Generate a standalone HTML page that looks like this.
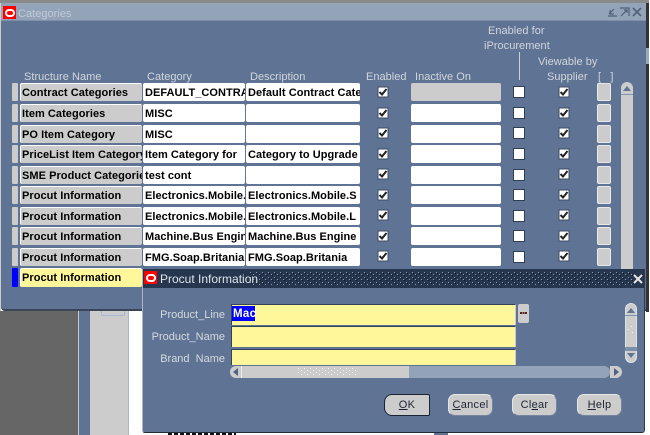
<!DOCTYPE html>
<html><head><meta charset="utf-8"><style>
html,body{margin:0;padding:0;background:#fff}
#p{position:relative;width:650px;height:435px;overflow:hidden;background:#fff;font-family:"Liberation Sans",sans-serif;font-size:11px}
#p div,#p svg{position:absolute}
.l{color:#d0d5dc;white-space:nowrap;letter-spacing:.03px;line-height:14px}
.h{left:12px;width:6px;height:18px;background:#ccc;border-radius:1px}
.s,.c,.d{height:18px;line-height:20px;font-weight:bold;color:#000;overflow:hidden;white-space:nowrap;letter-spacing:.05px;border-radius:2px;box-sizing:border-box}
.s{left:20px;width:122px;background:#ccc;padding-left:1px;border:1px solid #fff;border-width:1px 0 0 1px;line-height:19px}
.c{left:143px;width:102px;background:#fff;padding-left:2px}
.d{left:246px;width:113.5px;background:#fff;padding-left:2px}
.i{left:411px;width:90px;height:18px;background:#fff;border-radius:2px}
.x{left:597px;width:14px;height:18px;background:#ccc;border:1px solid #e8e8e8;border-radius:2px;box-sizing:border-box}
.u{left:514px;width:10px;height:10px;background:#fff;box-shadow:0 0 0 1px #2f3f55}
.f{left:231px;width:285px;background:#fff799;box-sizing:border-box;border-top:1px solid #33435c;border-left:1px solid #33435c;border-right:1px solid #c8ccd0}
.r{text-align:right;width:90px;left:135px;color:#d5d9df;line-height:14px;white-space:nowrap}
.btn{top:394px;height:22px;background:#ccc;border-radius:7px;box-sizing:border-box;border:1px solid #e6e6e6;border-right-color:#79859a;border-bottom-color:#79859a;color:#1c2433;text-align:center;line-height:20px;letter-spacing:.3px}
</style></head><body><div id="p">
<div style="left:0;top:311px;width:78px;height:124px;background:#666"></div>
<div style="left:78px;top:311px;width:1px;height:124px;background:#c8c8c8"></div>
<div style="left:79px;top:311px;width:11px;height:124px;background:#5f7494"></div>
<div style="left:90px;top:311px;width:38px;height:124px;background:#ccc;border-right:1px solid #a9b8d0"></div>
<div style="left:101px;top:311px;width:22px;height:4px;border:1px solid #a9b8d0;border-top:0;border-radius:0 0 2px 2px"></div>
<div style="left:646px;top:0;width:4px;height:435px;background:#fff"></div>
<div style="left:646px;top:0;width:3px;height:312px;background:#333"></div>
<div style="left:0;top:0;width:649px;height:3px;background:#8a8a8a"></div>
<div style="left:646px;top:48px;width:3px;height:16px;background:#9aa8bc"></div>
<div style="left:0;top:3px;width:1px;height:308px;background:#ccc"></div>
<div style="left:1px;top:3px;width:645px;height:308px;background:#5f7494;border-radius:0 0 0 4px;border-bottom:2px solid #3a4658;box-sizing:border-box"></div>
<div style="left:1px;top:3px;width:645px;height:18px;background:#93a3b8;border-bottom:1px solid #7f90a8;box-sizing:border-box"></div>
<div style="left:3px;top:6px;width:13px;height:13px;background:#f00"></div>
<div style="left:5px;top:9px;width:6px;height:4px;border:2px solid #fff;border-radius:4px"></div>
<div class="l" style="left:18px;top:7px;color:#c0cad6">Categories</div>
<svg style="left:606px;top:6px" width="38" height="12" viewBox="0 0 38 12"><path d="M2 10h9M3 8l5-5M4 4v4h4" fill="none" stroke="#4f5f75" stroke-width="1.200"/><path d="M14 2h9v8M15 10l6-6M18 4h3v3" fill="none" stroke="#4f5f75" stroke-width="1.200"/><path d="M27 2l8 8M35 2l-8 8" fill="none" stroke="#4f5f75" stroke-width="1.600"/></svg>

<div class="l" style="left:24px;top:70px">Structure Name</div>
<div class="l" style="left:147px;top:70px">Category</div>
<div class="l" style="left:250px;top:70px">Description</div>
<div class="l" style="left:366px;top:70px">Enabled</div>
<div class="l" style="left:415px;top:70px">Inactive On</div>
<div class="l" style="left:488px;top:24px">Enabled for</div>
<div class="l" style="left:484px;top:39px">iProcurement</div>
<div style="left:519px;top:52px;width:1px;height:28px;background:#ccd3dc"></div>
<div class="l" style="left:538px;top:55px">Viewable by</div>
<div class="l" style="left:547px;top:70px">Supplier</div>
<div class="l" style="left:598px;top:70px">[&nbsp;&nbsp;&nbsp;]</div>

<div class="h" style="top:83px"></div><div class="s" style="top:83px">Contract Categories</div><div class="c" style="top:83px">DEFAULT_CONTRACT</div><div class="d" style="top:83px">Default Contract Category</div>
<div class="h" style="top:104px"></div><div class="s" style="top:104px">Item Categories</div><div class="c" style="top:104px">MISC</div><div class="d" style="top:104px"></div>
<div class="h" style="top:125px"></div><div class="s" style="top:125px">PO Item Category</div><div class="c" style="top:125px">MISC</div><div class="d" style="top:125px"></div>
<div class="h" style="top:145px"></div><div class="s" style="top:145px">PriceList Item Category</div><div class="c" style="top:145px">Item Category for</div><div class="d" style="top:145px">Category to Upgrade</div>
<div class="h" style="top:166px"></div><div class="s" style="top:166px">SME Product Categories</div><div class="c" style="top:166px">test cont</div><div class="d" style="top:166px"></div>
<div class="h" style="top:186px"></div><div class="s" style="top:186px">Procut Information</div><div class="c" style="top:186px">Electronics.Mobile.S</div><div class="d" style="top:186px">Electronics.Mobile.S</div>
<div class="h" style="top:207px"></div><div class="s" style="top:207px">Procut Information</div><div class="c" style="top:207px">Electronics.Mobile.L</div><div class="d" style="top:207px">Electronics.Mobile.L</div>
<div class="h" style="top:227px"></div><div class="s" style="top:227px">Procut Information</div><div class="c" style="top:227px">Machine.Bus Engine</div><div class="d" style="top:227px">Machine.Bus Engine</div>
<div class="h" style="top:248px"></div><div class="s" style="top:248px">Procut Information</div><div class="c" style="top:248px">FMG.Soap.Britania</div><div class="d" style="top:248px">FMG.Soap.Britania</div>
<div class="h" style="top:268px;height:19px;background:#00f"></div><div class="s" style="top:268px;height:19px;background:#fff799">Procut Information</div>

<div class="i" style="top:83px;background:#ccc"></div>
<div class="i" style="top:104px"></div><div class="i" style="top:125px"></div><div class="i" style="top:145px"></div><div class="i" style="top:166px"></div><div class="i" style="top:186px"></div><div class="i" style="top:207px"></div><div class="i" style="top:227px"></div><div class="i" style="top:248px"></div>

<div class="u" style="top:87px"></div><div class="u" style="top:108px"></div><div class="u" style="top:128px"></div><div class="u" style="top:149px"></div><div class="u" style="top:170px"></div><div class="u" style="top:190px"></div><div class="u" style="top:211px"></div><div class="u" style="top:231px"></div><div class="u" style="top:252px"></div>

<div class="x" style="top:83px"></div><div class="x" style="top:104px"></div><div class="x" style="top:125px"></div><div class="x" style="top:145px"></div><div class="x" style="top:166px"></div><div class="x" style="top:186px"></div><div class="x" style="top:207px"></div><div class="x" style="top:227px"></div><div class="x" style="top:248px"></div>

<svg style="left:0;top:0" width="650" height="270" viewBox="0 0 650 270"><defs><g id="ck"><rect x="-5" y="-5" width="10" height="10" fill="#fff" stroke="#3c4d66"/><path d="M-3.500 0l2.500 2.500 4.500-5.500" fill="none" stroke="#222" stroke-width="2"/></g></defs>
<use href="#ck" x="383" y="92"/><use href="#ck" x="383" y="113"/><use href="#ck" x="383" y="133"/><use href="#ck" x="383" y="154"/><use href="#ck" x="383" y="174"/><use href="#ck" x="383" y="195"/><use href="#ck" x="383" y="215"/><use href="#ck" x="383" y="236"/><use href="#ck" x="383" y="256"/>
<use href="#ck" x="564" y="92"/><use href="#ck" x="564" y="113"/><use href="#ck" x="564" y="133"/><use href="#ck" x="564" y="154"/><use href="#ck" x="564" y="174"/><use href="#ck" x="564" y="195"/><use href="#ck" x="564" y="215"/><use href="#ck" x="564" y="236"/><use href="#ck" x="564" y="256"/></svg>

<div style="left:621px;top:82px;width:12px;height:188px;background:#ccc;border-radius:6px 6px 0 0"></div>
<div style="left:621px;top:94px;width:12px;height:1px;background:#8296b0"></div>
<svg style="left:622px;top:85px" width="10" height="8"><path d="M1 6h8L5 1z" fill="#5f7494"/></svg>

<div style="left:142px;top:269px;width:503px;height:164px;background:#5f7494;border-left:1px solid #aab6c6;border-bottom:1px solid #222c3a;border-right:1px solid #2f3b4d;border-radius:0 0 3px 3px;box-sizing:border-box"></div>
<div style="left:143px;top:269px;width:501px;height:19px;background:#26364f"></div>
<svg style="left:250px;top:272px" width="384" height="13"><defs><pattern id="dt" width="6" height="5" patternUnits="userSpaceOnUse"><rect x="0" y="0" width="1" height="1" fill="#8f9db2"/><rect x="3" y="2" width="1" height="1" fill="#8f9db2"/><rect x="1" y="1" width="1" height="1" fill="#0f1a2a"/><rect x="4" y="3" width="1" height="1" fill="#0f1a2a"/></pattern></defs><rect width="384" height="13" fill="url(#dt)"/></svg>
<div style="left:144px;top:271px;width:13px;height:13px;background:#f00"></div>
<div style="left:146px;top:274px;width:6px;height:4px;border:2px solid #fff;border-radius:4px"></div>
<div class="l" style="left:160px;top:272px;color:#dfe4ea;font-size:12px;letter-spacing:0">Procut Information</div>
<svg style="left:632px;top:273px" width="12" height="12"><path d="M2 2l8 8M10 2l-8 8" stroke="#e8e8e8" stroke-width="2"/></svg>

<div class="r" style="top:308px">Product_Line</div>
<div class="r" style="top:330px">Product_Name</div>
<div class="r" style="top:352px">Brand&nbsp; Name</div>
<div class="f" style="top:304px;height:21px"></div>
<div class="f" style="top:326px;height:21px"></div>
<div class="f" style="top:349px;height:16px"></div>
<div style="left:232px;top:306px;width:23px;height:15px;background:#00f;color:#fff;font-weight:bold;line-height:16px;padding-left:1px;letter-spacing:.3px;box-sizing:border-box;font-size:11.500px">Mac</div>
<div style="left:518px;top:304px;width:11px;height:19px;background:#ccc;border-radius:2px"></div>
<svg style="left:520px;top:312px" width="7" height="2"><rect width="2" height="2" fill="#5a1e1e"/><rect x="2.500" width="2" height="2" fill="#5a1e1e"/><rect x="5" width="2" height="2" fill="#5a1e1e"/></svg>

<div style="left:230px;top:366px;width:380px;height:12px;background:#93a3b8;border-radius:6px"></div>
<div style="left:230px;top:366px;width:179px;height:12px;background:#ccc;border-radius:6px 0 0 6px"></div>
<div style="left:241px;top:366px;width:1px;height:12px;background:#eee"></div>
<svg style="left:232px;top:368px" width="8" height="8"><path d="M6 0v8L1 4z" fill="#4f6380"/></svg>
<div style="left:610px;top:366px;width:12px;height:12px;background:#ccc;border-radius:0 6px 6px 0"></div>
<svg style="left:612px;top:368px" width="8" height="8"><path d="M2 0v8l5-4z" fill="#4f6380"/></svg>
<svg style="left:298px;top:368px" width="58" height="8"><defs><pattern id="gd" width="6" height="4" patternUnits="userSpaceOnUse"><rect x="0" y="0" width="1" height="1" fill="#f4f4f4"/><rect x="3" y="2" width="1" height="1" fill="#f4f4f4"/></pattern></defs><rect width="58" height="8" fill="url(#gd)"/></svg>

<div style="left:625px;top:303px;width:12px;height:60px;background:#ccc;border-radius:6px;border:1px solid #dfe3e8;box-sizing:border-box"></div>
<div style="left:625px;top:315px;width:12px;height:1px;background:#8296b0"></div>
<div style="left:625px;top:347px;width:12px;height:4px;background:#7d90aa"></div>
<svg style="left:626px;top:307px" width="10" height="7"><path d="M1 6h8L5 1z" fill="#5f7494"/></svg>
<svg style="left:626px;top:352px" width="10" height="7"><path d="M1 1h8L5 6z" fill="#5f7494"/></svg>
<svg style="left:627px;top:325px" width="8" height="12"><rect x="4" y="1" width="1" height="1" fill="#f4f4f4"/><rect x="1" y="4" width="1" height="1" fill="#f4f4f4"/><rect x="5" y="7" width="1" height="1" fill="#f4f4f4"/></svg>

<div class="btn" style="left:384px;width:46px;border:1px solid #1c2433;border-radius:8px 2px 2px 8px"><u>O</u>K</div>
<div class="btn" style="left:448px;width:45px"><u>C</u>ancel</div>
<div class="btn" style="left:512px;width:45px">Cl<u>e</u>ar</div>
<div class="btn" style="left:577px;width:45px"><u>H</u>elp</div>
<div style="left:168px;top:433px;width:68px;height:2px;background:repeating-linear-gradient(90deg,#111 0,#111 4px,#fff 4px,#fff 6px)"></div>
<div style="left:434px;top:433px;width:14px;height:2px;background:#5f7494"></div>
</div></body></html>
